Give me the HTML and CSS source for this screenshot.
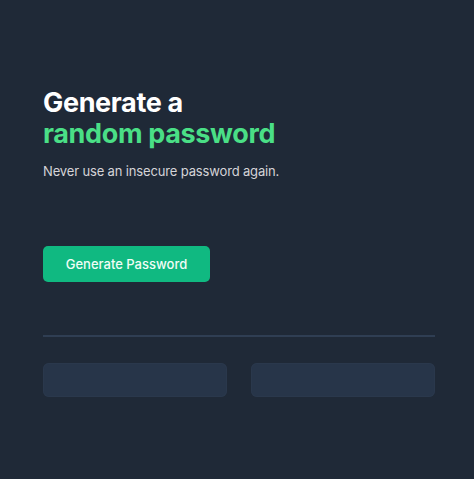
FILE: index.html
```html
<!DOCTYPE html>
<html lang="en">
<head>
<meta charset="utf-8">
<title>Password Generator</title>
<link rel="stylesheet" href="styles.css">
</head>
<body>
<main class="container">
  <h1 class="title">Generate a<br><span class="accent">random password</span></h1>
  <p class="subtitle">Never use an insecure password again.</p>
  <button class="btn">Generate Password</button>
  <hr class="divider">
  <div class="outputs">
    <div class="output"></div>
    <div class="output"></div>
  </div>
</main>
</body>
</html>
```
FILE: styles.css
```css
html, body {
  margin: 0;
  padding: 0;
  background: #1f2937;
  height: 100%;
}
body {
  font-family: Inter, "Noto Sans", sans-serif;
}
.container {
  width: 392px;
  padding: 87px 0 0 43px;
  display: flex;
  flex-direction: column;
}
.title {
  margin: 0;
  font-size: 27px;
  line-height: 31px;
  font-weight: 700;
  color: #ffffff;
  letter-spacing: -0.35px;
}
.accent {
  color: #4adf86;
}
.subtitle {
  margin: 13px 0 0;
  font-size: 13px;
  line-height: 18px;
  color: #d5d4d8;
  letter-spacing: -0.15px;
}
.btn {
  margin-top: 66px;
  align-self: flex-start;
  width: 167px;
  height: 36px;
  border: none;
  border-radius: 5px;
  background: #10b981;
  color: #f0fdf6;
  font-family: Inter, "Noto Sans", sans-serif;
  font-size: 13px;
  font-weight: 500;
  padding: 0;
}
.divider {
  margin: 53px 0 0;
  border: none;
  height: 2px;
  background: #2f3e53;
}
.outputs {
  margin-top: 26px;
  display: grid;
  grid-template-columns: 1fr 1fr;
  gap: 24px;
}
.output {
  height: 34px;
  border-radius: 6px;
  background: #273549;
  box-shadow: inset 0 0 0 1px #2a384c;
}
```
